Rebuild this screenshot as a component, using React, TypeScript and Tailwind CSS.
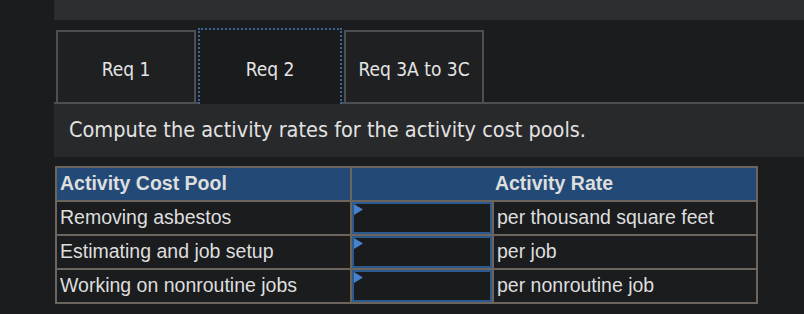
import React from "react";

const rows = [
  { pool: "Removing asbestos", unit: "per thousand square feet" },
  { pool: "Estimating and job setup", unit: "per job" },
  { pool: "Working on nonroutine jobs", unit: "per nonroutine job" },
];

const tabFont = { fontFamily: '"DejaVu Sans Condensed", "DejaVu Sans", sans-serif' };

export default function App() {
  return (
    <div className="w-[804px] h-[314px] bg-[#1b1c1e] flex overflow-hidden">
      <div className="w-[54px] shrink-0" />
      <div className="flex-1 flex flex-col">
        <div className="h-[20px] bg-[#2c2d2f]" />
        <div className="mt-[8px] h-[76px] flex items-end gap-[2px] pl-[2px] border-b-2 border-[#4a5053]" style={tabFont}>
          <div className="w-[140px] h-[72px] border-2 border-b-0 border-[#4a5053] bg-[#1f2022] flex items-center justify-center pt-[4px] text-[19px] text-[#e4e4e4]">
            Req 1
          </div>
          <div className="relative z-10 w-[144px] h-[76px] -mb-[2px] border-2 border-b-0 border-dotted border-[#3b6396] bg-[#1a1b1d] flex items-center justify-center pt-[4px] text-[19px] text-[#e4e4e4]">
            Req 2
          </div>
          <div className="w-[140px] h-[72px] border-2 border-b-0 border-[#4a5053] bg-[#1f2022] flex items-center justify-center pt-[4px] text-[19px] text-[#e4e4e4]">
            Req 3A to 3C
          </div>
        </div>
        <div className="h-[53px] bg-[#28292b] flex items-center pl-[15px] text-[21.5px] text-[#e2e2e2]" style={tabFont}>
          Compute the activity rates for the activity cost pools.
        </div>
        <div
          className="mt-[9px] ml-[1px] w-[703px] bg-[#6b655d] p-[2px] grid grid-cols-[293px_140px_262px] auto-rows-[32px] gap-[2px] text-[19.5px] text-[#dedede]"
          style={{ fontFamily: '"Liberation Sans", Arial, sans-serif' }}
        >
          <div className="bg-[#234a77] flex items-center pl-[3px] font-bold">Activity Cost Pool</div>
          <div className="col-span-2 bg-[#234a77] flex items-center justify-center font-bold">Activity Rate</div>
          {rows.map((r) => (
            <React.Fragment key={r.pool}>
              <div className="bg-[#1b1c1e] flex items-center pl-[3px]">{r.pool}</div>
              <div className="bg-[#1b1c1e] p-0">
                <div className="relative h-full w-full border-2 border-[#2c5a8e] bg-[#1a1b1d]">
                  <svg className="absolute left-0 top-0" width="9" height="11" viewBox="0 0 9 11">
                    <polygon points="0,0 9,5.5 0,11" fill="#4682cc" />
                  </svg>
                </div>
              </div>
              <div className="bg-[#1b1c1e] flex items-center pl-[3px]">{r.unit}</div>
            </React.Fragment>
          ))}
        </div>
      </div>
    </div>
  );
}
